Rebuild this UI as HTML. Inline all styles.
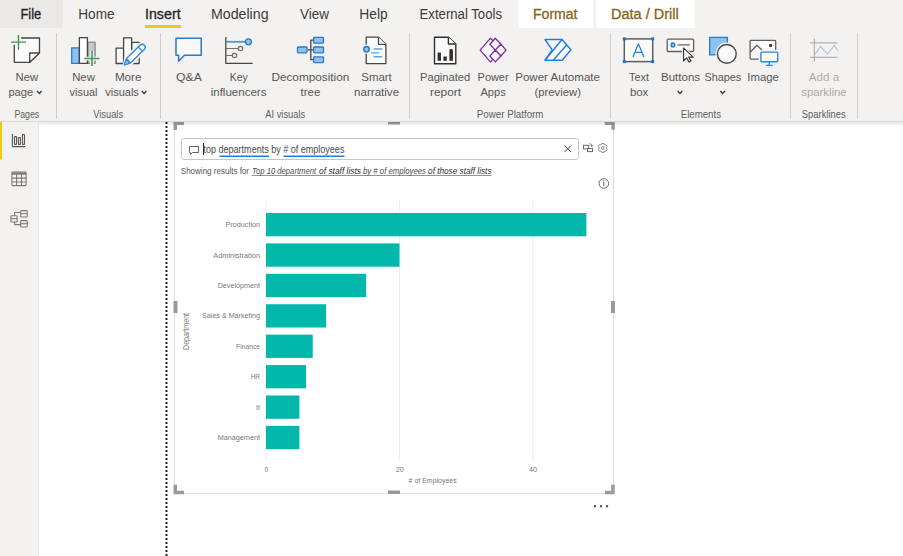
<!DOCTYPE html>
<html><head><meta charset="utf-8"><style>
html,body{margin:0;padding:0;background:#fff;width:903px;height:556px;overflow:hidden}
svg{position:absolute;left:0;top:0;font-family:"Liberation Sans",sans-serif}
</style></head><body>
<svg width="903" height="556" viewBox="0 0 903 556">
<rect x="0" y="0" width="903" height="121" fill="#f3f2f1"/>
<rect x="0" y="0" width="63" height="28" fill="#eae9e8"/>
<rect x="518.5" y="0" width="74.5" height="28" fill="#ffffff"/>
<rect x="596.5" y="0" width="98" height="28" fill="#ffffff"/>
<defs><linearGradient id="sh" x1="0" y1="0" x2="0" y2="1"><stop offset="0" stop-color="#000" stop-opacity="0.10"/><stop offset="1" stop-color="#000" stop-opacity="0"/></linearGradient></defs>
<rect x="0" y="121" width="39" height="435" fill="#f3f2f1"/>
<rect x="0" y="121" width="2" height="38.5" fill="#f2c811"/>
<rect x="38" y="121" width="1" height="435" fill="#ebe9e7"/>
<rect x="145" y="25" width="36" height="3" fill="#f2c811"/>
<rect x="56" y="33" width="1" height="86" fill="#cfcdcb"/>
<rect x="160" y="33" width="1" height="86" fill="#cfcdcb"/>
<rect x="409" y="33" width="1" height="86" fill="#cfcdcb"/>
<rect x="610" y="33" width="1" height="86" fill="#cfcdcb"/>
<rect x="790" y="33" width="1" height="86" fill="#cfcdcb"/>
<rect x="857" y="33" width="1" height="86" fill="#cfcdcb"/>
<line x1="166.5" y1="122" x2="166.5" y2="556" stroke="#222" stroke-width="2" stroke-dasharray="2 2"/>
<rect x="174.5" y="121.5" width="439" height="372" fill="none" stroke="#dedede" stroke-width="1"/>
<path d="M173.5 121.5 H184 V125 H177 V130 H173.5 Z" fill="#9a9a9a"/>
<path d="M614.9 121.5 H604.8 V125 H611.4 V129.8 H614.9 Z" fill="#9a9a9a"/>
<path d="M173.5 494.3 H184 V490.8 H177 V484.7 H173.5 Z" fill="#9a9a9a"/>
<path d="M614.7 494.3 H604.9 V490.8 H611.2 V484.8 H614.7 Z" fill="#9a9a9a"/>
<rect x="388" y="121.5" width="12" height="3" fill="#9a9a9a"/>
<rect x="388" y="490.5" width="12" height="3.5" fill="#9a9a9a"/>
<rect x="173.5" y="301" width="4" height="12" fill="#9a9a9a"/>
<rect x="611" y="301" width="4" height="12" fill="#9a9a9a"/>
<rect x="0" y="121" width="903" height="1" fill="#d9d8d7"/>
<rect x="39" y="122" width="864" height="4" fill="url(#sh)"/>
<rect x="181.5" y="138.5" width="397" height="21" rx="2" fill="#fff" stroke="#c8c6c4"/>
<path d="M189.5 146.5 h9 v6 h-6 l-2 2 v-2 h-1 z" fill="none" stroke="#605e5c" stroke-width="1"/>
<rect x="203" y="143" width="1" height="12" fill="#222"/>
<rect x="219.5" y="155.5" width="49.5" height="1.5" fill="#1e7fd8"/>
<rect x="283.5" y="155.5" width="61" height="1.5" fill="#1e7fd8"/>
<path d="M564.5 145.5 L571 152 M571 145.5 L564.5 152" stroke="#444" stroke-width="1"/>
<g fill="none" stroke="#6a6a6a" stroke-width="1"><rect x="583.5" y="145.3" width="5.2" height="3.6"/><rect x="587.5" y="148.5" width="5" height="3.1" fill="#fff"/><path d="M589.7 143.6 Q591.8 143.6 591.8 146" stroke-width="0.9"/><path d="M590.6 145.4 L591.8 146.8 L593 145.4" stroke-width="0.9"/></g>
<g fill="none" stroke="#7a7a7a" stroke-width="0.9" stroke-linejoin="round"><path d="M606.39 148.16 L607.23 149.14 L606.09 151.11 L604.82 150.88 L604.37 151.14 L603.94 152.36 L601.66 152.36 L601.23 151.14 L600.78 150.88 L599.51 151.11 L598.37 149.14 L599.21 148.16 L599.21 147.64 L598.37 146.66 L599.51 144.69 L600.78 144.92 L601.23 144.66 L601.66 143.44 L603.94 143.44 L604.37 144.66 L604.82 144.92 L606.09 144.69 L607.23 146.66 L606.39 147.64 Z"/><ellipse cx="602.8" cy="147.9" rx="1.2" ry="1.6"/></g>
<circle cx="603.8" cy="183.5" r="4.8" fill="none" stroke="#666" stroke-width="1"/><rect x="603.3" y="182" width="1" height="4" fill="#666"/><rect x="603.3" y="180.3" width="1" height="1" fill="#666"/>
<rect x="265.5" y="200.5" width="1" height="261" fill="#eeeeee"/>
<rect x="399.0" y="200.5" width="1" height="261" fill="#eeeeee"/>
<rect x="532.5" y="200.5" width="1" height="261" fill="#eeeeee"/>
<rect x="266" y="213.00" width="320.40" height="23.3" fill="#01b8aa"/>
<rect x="266" y="243.41" width="133.50" height="23.3" fill="#01b8aa"/>
<rect x="266" y="273.82" width="100.12" height="23.3" fill="#01b8aa"/>
<rect x="266" y="304.23" width="60.07" height="23.3" fill="#01b8aa"/>
<rect x="266" y="334.64" width="46.73" height="23.3" fill="#01b8aa"/>
<rect x="266" y="365.05" width="40.05" height="23.3" fill="#01b8aa"/>
<rect x="266" y="395.46" width="33.38" height="23.3" fill="#01b8aa"/>
<rect x="266" y="425.87" width="33.38" height="23.3" fill="#01b8aa"/>
<rect x="593.9" y="505.1" width="2.2" height="2.2" fill="#555"/>
<rect x="599.9" y="505.1" width="2.2" height="2.2" fill="#555"/>
<rect x="605.9" y="505.1" width="2.2" height="2.2" fill="#555"/>
<path d="M37.0 91.10000000000001 l2.3 2.3 l2.3 -2.3" fill="none" stroke="#3b3a39" stroke-width="1.4"/>
<path d="M141.79999999999998 91.10000000000001 l2.3 2.3 l2.3 -2.3" fill="none" stroke="#3b3a39" stroke-width="1.4"/>
<path d="M677.7 91.10000000000001 l2.3 2.3 l2.3 -2.3" fill="none" stroke="#3b3a39" stroke-width="1.4"/>
<path d="M720.3000000000001 91.10000000000001 l2.3 2.3 l2.3 -2.3" fill="none" stroke="#3b3a39" stroke-width="1.4"/>
<rect x="251.5" y="175" width="240" height="0.8" fill="#777"/>
<!-- New page -->
<g stroke-linejoin="round">
<path d="M14.3 44.8 V62.3 H29.7 L39.5 52.8 V38 H21.1" fill="#fafafa" stroke="#484644" stroke-width="1.3"/>
<path d="M29.7 62.3 V53 H39.5 Z" fill="#fff" stroke="#484644" stroke-width="1.3"/>
<path d="M11.1 42.1 H26 M18.5 34.9 V49.7" stroke="#3a9a52" stroke-width="1.4" fill="none"/>
</g>
<!-- New visual -->
<g stroke-linejoin="round">
<rect x="71.7" y="47.9" width="7.6" height="15.5" fill="#8cc1f3" stroke="#2f7bd0" stroke-width="1.3"/>
<rect x="87.9" y="42.1" width="7.2" height="21.3" fill="#c8c8c8" stroke="#8a8a8a" stroke-width="1.3"/>
<rect x="79.4" y="37.6" width="8" height="25.8" fill="#fff" stroke="#484644" stroke-width="1.3"/>
<path d="M84.3 58.6 H99.5 M92 51.1 V66" stroke="#f3f2f1" stroke-width="3.6" fill="none"/>
<path d="M84.3 58.6 H99.5 M92 51.1 V66" stroke="#3a9a52" stroke-width="1.5" fill="none"/>
</g>
<!-- More visuals -->
<g stroke-linejoin="round" fill="#fafafa" stroke="#484644" stroke-width="1.3">
<rect x="116.1" y="48.2" width="7.5" height="15.3"/>
<rect x="131.6" y="42.4" width="7.6" height="21.1"/>
<rect x="123.6" y="37.9" width="8" height="25.6"/>
</g>
<g transform="translate(123.6 65.6) rotate(-44.5)" stroke-linejoin="round">
<path d="M1 0 L7 -4 H26 A4 4 0 0 1 26 4 H7 Z" fill="#f3f2f1" stroke="#f3f2f1" stroke-width="3"/>
<path d="M1 0 L7 -3 H26 A3 3 0 0 1 26 3 H7 Z" fill="#fafafa" stroke="#2b88d8" stroke-width="1.3"/>
<path d="M1 0 L6 -2.5 V2.5 Z" fill="#8cc1f3" stroke="#2b88d8" stroke-width="1"/>
<path d="M7 -3 V3 M23.5 -3 V3" stroke="#2b88d8" stroke-width="1.2" fill="none"/>
</g>
<!-- Q&A -->
<path d="M176 38.3 H201.2 V55.2 H184.4 L178.6 61.2 V55.2 H176 Z" fill="#f9f9f9" stroke="#2b79c8" stroke-width="1.5" stroke-linejoin="round"/>
<!-- Key influencers -->
<g fill="none" stroke-linejoin="round">
<path d="M225.8 36.9 V63.3 H252.6" stroke="#484644" stroke-width="1.3"/>
<path d="M225.8 41.8 H245" stroke="#4a9ad8" stroke-width="1.8"/>
<circle cx="248.4" cy="41.8" r="3" fill="#8cc4f5" stroke="#2b79c8" stroke-width="1.3"/>
<path d="M225.8 48.5 H238.2 M225.8 55.5 H232.2" stroke="#6e6d6b" stroke-width="1.2"/>
<circle cx="240.5" cy="48.5" r="2.2" fill="#f3f2f1" stroke="#6e6d6b" stroke-width="1.2"/>
<circle cx="234.5" cy="55.5" r="2.2" fill="#f3f2f1" stroke="#6e6d6b" stroke-width="1.2"/>
</g>
<!-- Decomposition tree -->
<g stroke-linejoin="round">
<path d="M307.5 49.9 H313 M313 40.2 H310.8 V59.6 H313" fill="none" stroke="#484644" stroke-width="1.3"/>
<g fill="#8ec2f2" stroke="#2b79c8" stroke-width="1.3">
<rect x="297.5" y="47" width="9.5" height="5.8" rx="0.8"/>
<rect x="313.6" y="37.3" width="9.9" height="5.9" rx="0.8"/>
<rect x="313.6" y="47" width="9.9" height="5.8" rx="0.8"/>
<rect x="313.6" y="56.9" width="9.9" height="5.7" rx="0.8"/>
</g>
</g>
<!-- Smart narrative -->
<g stroke-linejoin="round">
<path d="M366.2 63.6 V37.2 H378.5 L385.9 44.3 V63.6 Z" fill="#fafafa" stroke="#484644" stroke-width="1.3"/>
<path d="M378.5 37.2 V44.3 H385.9" fill="#fff" stroke="#484644" stroke-width="1.3"/>
<circle cx="366.5" cy="49.2" r="4.6" fill="#f3f2f1"/>
<circle cx="366.5" cy="49.2" r="2.7" fill="#8cc4f5" stroke="#1f78d1" stroke-width="1.4"/>
<path d="M373.6 49 H382.3 M371 52.9 H379.4 M373.6 56.7 H382.3" stroke="#5aa5e0" stroke-width="1.4" fill="none"/>
</g>
<!-- Paginated report -->
<g stroke-linejoin="round">
<path d="M434.5 63.7 V37.2 H448.4 L455.8 44 V63.7 Z" fill="#fafafa" stroke="#323130" stroke-width="1.4"/>
<path d="M448.4 37.2 V44 H455.8" fill="#fff" stroke="#323130" stroke-width="1.4"/>
<rect x="437.6" y="52.6" width="3.4" height="8.2" fill="#323130"/>
<rect x="443.4" y="56.5" width="3.4" height="4.3" fill="#323130"/>
<rect x="449.4" y="49.2" width="3.5" height="11.6" fill="#323130"/>
</g>
<!-- Power Apps -->
<g fill="#fbfbfb" stroke="#7e2a9f" stroke-width="1.3" stroke-linejoin="round" stroke-linecap="round">
<path d="M490.3 38.3 L480.2 50.1 L490.3 61.9 L495 57 L495.3 43 Z"/>
<path d="M495.3 38.3 L500.9 44.2 L495.3 50.1 L489.9 44.2 Z"/>
<path d="M495.3 50.1 L500.9 44.2 L506 50.1 L500.9 56 Z"/>
<path d="M495.3 50.1 L500.9 56 L495.3 61.9 L489.9 56 Z"/>
</g>
<!-- Power Automate -->
<g fill="#fafafa" stroke="#1f7de0" stroke-width="1.4" stroke-linejoin="round">
<path d="M545 39.5 H562 L570.9 49.8 L562.3 60.2 H545 L552.2 49.8 Z"/>
<path d="M562 39.5 L545 60.2 M566.6 45 L553.3 60.2" fill="none"/>
</g>
<!-- Text box -->
<g>
<rect x="624.3" y="38.9" width="28.4" height="22.7" fill="#fafafa" stroke="#605e5c" stroke-width="1.5"/>
<g fill="#0f78d4">
<rect x="622.8" y="37.4" width="3" height="3"/><rect x="651.2" y="37.4" width="3" height="3"/>
<rect x="622.8" y="60.1" width="3" height="3"/><rect x="651.2" y="60.1" width="3" height="3"/>
</g>
<path d="M633 57 L638.4 43.8 L643.9 57 M634.8 52.3 H642.1" fill="none" stroke="#2089dd" stroke-width="1.3" stroke-linejoin="round"/>
</g>
<!-- Buttons -->
<g stroke-linejoin="round">
<rect x="667.2" y="39.1" width="26.4" height="12.4" rx="1" fill="#f9f9f9" stroke="#605e5c" stroke-width="1.3"/>
<circle cx="672.9" cy="44.9" r="1.9" fill="#8cc4f5" stroke="#1f78d1" stroke-width="1.3"/>
<path d="M677.5 44.9 H689.9" stroke="#6e6d6b" stroke-width="1.3"/>
<path d="M683.6 48.1 V61 L686.6 57.9 L689 62 L691 61 L688.7 57.1 L693.3 57.1 Z" fill="#f3f2f1" stroke="#f3f2f1" stroke-width="3"/>
<path d="M683.6 48.1 V61 L686.6 57.9 L689 62 L691 61 L688.7 57.1 L693.3 57.1 Z" fill="#fff" stroke="#3b3a39" stroke-width="1.2"/>
</g>
<!-- Shapes -->
<g>
<rect x="709.7" y="37.4" width="17.7" height="17.4" fill="#8ec2f2" stroke="#2b79c8" stroke-width="1.3"/>
<circle cx="726.8" cy="53.9" r="11.3" fill="#f3f2f1"/>
<circle cx="726.8" cy="53.9" r="9.4" fill="#f9f9f9" stroke="#484644" stroke-width="1.4"/>
</g>
<!-- Image -->
<g stroke-linejoin="round">
<rect x="750.1" y="40.4" width="25.6" height="18.7" rx="0.8" fill="#fafafa" stroke="#605e5c" stroke-width="1.3"/>
<path d="M750.1 52.3 L756.9 45.3 L762.5 50.6" fill="none" stroke="#605e5c" stroke-width="1.3"/>
<circle cx="770.6" cy="45.4" r="1.6" fill="#323130"/>
<rect x="758.7" y="50" width="21.2" height="14" fill="#f3f2f1"/>
<rect x="760.9" y="52.1" width="16.8" height="9.7" rx="0.8" fill="#fafafa" stroke="#2b88d8" stroke-width="1.4"/>
<path d="M769.2 62 V65.3 M765.9 65.4 H772.6" fill="none" stroke="#2b88d8" stroke-width="1.3"/>
</g>
<!-- Sparkline -->
<g fill="none">
<path d="M814.4 38.8 V61.5 M810 42.8 H837.4 M810 57.3 H837.4" stroke="#b3b1af" stroke-width="1.2"/>
<path d="M815.3 54.1 L820.5 46.3 L827.5 54.1 L834.4 45.4 L837.9 50.7" stroke="#a6c8e6" stroke-width="1.1" stroke-linejoin="round"/>
</g>
<!-- left nav: report -->
<g fill="none" stroke="#5a5856" stroke-width="1.1" stroke-linejoin="round">
<path d="M12.4 134 V146.6 H25.4"/>
<rect x="14.5" y="136.6" width="2" height="7.8" rx="0.5"/>
<rect x="18.4" y="137.6" width="2" height="6.8" rx="0.5"/>
<rect x="22.5" y="134.6" width="2" height="9.8" rx="0.5"/>
</g>
<!-- left nav: table -->
<g fill="none" stroke="#7a7876" stroke-width="1.05">
<rect x="11.9" y="172.1" width="14.2" height="13.5" rx="0.8"/>
<path d="M11.9 173.8 H26.1" stroke-width="1.8"/>
<path d="M11.9 178.1 H26.1 M11.9 181.9 H26.1 M16.6 174.3 V185.6 M21.5 174.3 V185.6"/>
</g>
<!-- left nav: model -->
<g fill="none" stroke="#7a7876" stroke-width="1.05" stroke-linejoin="round">
<rect x="10.9" y="215.8" width="6.2" height="6.2" rx="0.8"/>
<path d="M10.9 218.7 H17.1"/>
<rect x="20.7" y="210.6" width="6.5" height="6.4" rx="0.8"/>
<path d="M20.7 213.7 H27.2"/>
<rect x="20.7" y="220.6" width="6.5" height="6.4" rx="0.8"/>
<path d="M20.7 223.7 H27.2"/>
<path d="M14.6 215.8 V212.4 H20.7 M14.6 222 V224.6 H20.7"/>
</g>

<text x="20.40" y="18.60" font-size="14" fill="#252423" font-weight="normal" font-style="normal" textLength="20.80" lengthAdjust="spacingAndGlyphs" stroke="#252423" stroke-width="0.3">File</text>
<text x="78.30" y="18.60" font-size="14" fill="#3b3a39" font-weight="normal" font-style="normal" textLength="36.29" lengthAdjust="spacingAndGlyphs" >Home</text>
<text x="145.00" y="18.60" font-size="14" fill="#252423" font-weight="normal" font-style="normal" textLength="35.60" lengthAdjust="spacingAndGlyphs" stroke="#252423" stroke-width="0.3">Insert</text>
<text x="210.90" y="18.60" font-size="14" fill="#3b3a39" font-weight="normal" font-style="normal" textLength="57.70" lengthAdjust="spacingAndGlyphs" >Modeling</text>
<text x="300.00" y="18.60" font-size="14" fill="#3b3a39" font-weight="normal" font-style="normal" textLength="28.97" lengthAdjust="spacingAndGlyphs" >View</text>
<text x="359.30" y="18.60" font-size="14" fill="#3b3a39" font-weight="normal" font-style="normal" textLength="28.40" lengthAdjust="spacingAndGlyphs" >Help</text>
<text x="419.60" y="18.60" font-size="14" fill="#3b3a39" font-weight="normal" font-style="normal" textLength="82.40" lengthAdjust="spacingAndGlyphs" >External Tools</text>
<text x="533.00" y="18.60" font-size="14" fill="#84661a" font-weight="normal" font-style="normal" textLength="44.50" lengthAdjust="spacingAndGlyphs" stroke="#84661a" stroke-width="0.3">Format</text>
<text x="611.00" y="18.60" font-size="14" fill="#84661a" font-weight="normal" font-style="normal" textLength="67.69" lengthAdjust="spacingAndGlyphs" stroke="#84661a" stroke-width="0.3">Data / Drill</text>
<text x="15.60" y="80.50" font-size="11.5" fill="#575553" font-weight="normal" font-style="normal" textLength="22.67" lengthAdjust="spacingAndGlyphs" >New</text>
<text x="8.40" y="96.00" font-size="11.5" fill="#575553" font-weight="normal" font-style="normal" textLength="24.70" lengthAdjust="spacingAndGlyphs" >page</text>
<text x="72.20" y="80.50" font-size="11.5" fill="#575553" font-weight="normal" font-style="normal" textLength="22.67" lengthAdjust="spacingAndGlyphs" >New</text>
<text x="69.60" y="96.00" font-size="11.5" fill="#575553" font-weight="normal" font-style="normal" textLength="27.90" lengthAdjust="spacingAndGlyphs" >visual</text>
<text x="114.90" y="80.50" font-size="11.5" fill="#575553" font-weight="normal" font-style="normal" textLength="26.60" lengthAdjust="spacingAndGlyphs" >More</text>
<text x="105.20" y="96.00" font-size="11.5" fill="#575553" font-weight="normal" font-style="normal" textLength="33.70" lengthAdjust="spacingAndGlyphs" >visuals</text>
<text x="176.10" y="80.50" font-size="11.5" fill="#575553" font-weight="normal" font-style="normal" textLength="25.70" lengthAdjust="spacingAndGlyphs" >Q&amp;A</text>
<text x="229.80" y="80.50" font-size="11.5" fill="#575553" font-weight="normal" font-style="normal" textLength="18.00" lengthAdjust="spacingAndGlyphs" >Key</text>
<text x="210.70" y="96.00" font-size="11.5" fill="#575553" font-weight="normal" font-style="normal" textLength="55.80" lengthAdjust="spacingAndGlyphs" >influencers</text>
<text x="271.40" y="80.50" font-size="11.5" fill="#575553" font-weight="normal" font-style="normal" textLength="77.90" lengthAdjust="spacingAndGlyphs" >Decomposition</text>
<text x="300.60" y="96.00" font-size="11.5" fill="#575553" font-weight="normal" font-style="normal" textLength="19.80" lengthAdjust="spacingAndGlyphs" >tree</text>
<text x="361.30" y="80.50" font-size="11.5" fill="#575553" font-weight="normal" font-style="normal" textLength="30.50" lengthAdjust="spacingAndGlyphs" >Smart</text>
<text x="354.10" y="96.00" font-size="11.5" fill="#575553" font-weight="normal" font-style="normal" textLength="45.00" lengthAdjust="spacingAndGlyphs" >narrative</text>
<text x="420.00" y="80.50" font-size="11.5" fill="#575553" font-weight="normal" font-style="normal" textLength="50.20" lengthAdjust="spacingAndGlyphs" >Paginated</text>
<text x="430.00" y="96.00" font-size="11.5" fill="#575553" font-weight="normal" font-style="normal" textLength="31.00" lengthAdjust="spacingAndGlyphs" >report</text>
<text x="477.60" y="80.50" font-size="11.5" fill="#575553" font-weight="normal" font-style="normal" textLength="30.99" lengthAdjust="spacingAndGlyphs" >Power</text>
<text x="480.40" y="96.00" font-size="11.5" fill="#575553" font-weight="normal" font-style="normal" textLength="25.30" lengthAdjust="spacingAndGlyphs" >Apps</text>
<text x="515.20" y="80.50" font-size="11.5" fill="#575553" font-weight="normal" font-style="normal" textLength="84.81" lengthAdjust="spacingAndGlyphs" >Power Automate</text>
<text x="534.50" y="96.00" font-size="11.5" fill="#575553" font-weight="normal" font-style="normal" textLength="46.50" lengthAdjust="spacingAndGlyphs" >(preview)</text>
<text x="629.10" y="80.50" font-size="11.5" fill="#575553" font-weight="normal" font-style="normal" textLength="19.80" lengthAdjust="spacingAndGlyphs" >Text</text>
<text x="629.90" y="96.00" font-size="11.5" fill="#575553" font-weight="normal" font-style="normal" textLength="18.40" lengthAdjust="spacingAndGlyphs" >box</text>
<text x="661.00" y="80.50" font-size="11.5" fill="#575553" font-weight="normal" font-style="normal" textLength="39.10" lengthAdjust="spacingAndGlyphs" >Buttons</text>
<text x="704.50" y="80.50" font-size="11.5" fill="#575553" font-weight="normal" font-style="normal" textLength="36.70" lengthAdjust="spacingAndGlyphs" >Shapes</text>
<text x="747.30" y="80.50" font-size="11.5" fill="#575553" font-weight="normal" font-style="normal" textLength="31.50" lengthAdjust="spacingAndGlyphs" >Image</text>
<text x="808.80" y="80.50" font-size="11.5" fill="#acaaa8" font-weight="normal" font-style="normal" textLength="30.29" lengthAdjust="spacingAndGlyphs" >Add a</text>
<text x="801.30" y="96.00" font-size="11.5" fill="#acaaa8" font-weight="normal" font-style="normal" textLength="45.30" lengthAdjust="spacingAndGlyphs" >sparkline</text>
<text x="14.40" y="118.00" font-size="10" fill="#605e5c" font-weight="normal" font-style="normal" textLength="24.80" lengthAdjust="spacingAndGlyphs" >Pages</text>
<text x="93.20" y="118.00" font-size="10" fill="#605e5c" font-weight="normal" font-style="normal" textLength="29.90" lengthAdjust="spacingAndGlyphs" >Visuals</text>
<text x="265.30" y="118.00" font-size="10" fill="#605e5c" font-weight="normal" font-style="normal" textLength="39.80" lengthAdjust="spacingAndGlyphs" >AI visuals</text>
<text x="476.80" y="118.00" font-size="10" fill="#605e5c" font-weight="normal" font-style="normal" textLength="66.70" lengthAdjust="spacingAndGlyphs" >Power Platform</text>
<text x="680.70" y="118.00" font-size="10" fill="#605e5c" font-weight="normal" font-style="normal" textLength="40.30" lengthAdjust="spacingAndGlyphs" >Elements</text>
<text x="801.80" y="118.00" font-size="10" fill="#605e5c" font-weight="normal" font-style="normal" textLength="44.00" lengthAdjust="spacingAndGlyphs" >Sparklines</text>
<text x="203.50" y="152.70" font-size="11" fill="#4a4a4a" font-weight="normal" font-style="normal" textLength="140.90" lengthAdjust="spacingAndGlyphs" >top departments by # of employees</text>
<text x="180.80" y="173.80" font-size="8.8" fill="#555" font-weight="normal" font-style="normal" textLength="68.20" lengthAdjust="spacingAndGlyphs" >Showing results for</text>
<text x="252.00" y="173.80" font-size="8.8" fill="#4a4a4a" font-weight="normal" font-style="italic" textLength="64.13" lengthAdjust="spacingAndGlyphs" >Top 10 department</text>
<text x="319.10" y="173.80" font-size="8.8" fill="#2a2a2a" font-weight="normal" font-style="italic" textLength="41.90" lengthAdjust="spacingAndGlyphs" >of staff lists</text>
<text x="363.00" y="173.80" font-size="8.8" fill="#4a4a4a" font-weight="normal" font-style="italic" textLength="63.00" lengthAdjust="spacingAndGlyphs" >by # of employees</text>
<text x="428.10" y="173.80" font-size="8.8" fill="#2a2a2a" font-weight="normal" font-style="italic" textLength="63.40" lengthAdjust="spacingAndGlyphs" >of those staff lists</text>
<text x="225.60" y="227.10" font-size="7.9" fill="#7a7a7a" font-weight="normal" font-style="normal" textLength="34.40" lengthAdjust="spacingAndGlyphs" >Production</text>
<text x="213.30" y="257.51" font-size="7.9" fill="#7a7a7a" font-weight="normal" font-style="normal" textLength="46.70" lengthAdjust="spacingAndGlyphs" >Administration</text>
<text x="217.70" y="287.92" font-size="7.9" fill="#7a7a7a" font-weight="normal" font-style="normal" textLength="42.30" lengthAdjust="spacingAndGlyphs" >Development</text>
<text x="202.10" y="318.33" font-size="7.9" fill="#7a7a7a" font-weight="normal" font-style="normal" textLength="57.90" lengthAdjust="spacingAndGlyphs" >Sales &amp; Marketing</text>
<text x="236.10" y="348.74" font-size="7.9" fill="#7a7a7a" font-weight="normal" font-style="normal" textLength="23.90" lengthAdjust="spacingAndGlyphs" >Finance</text>
<text x="250.70" y="379.15" font-size="7.9" fill="#7a7a7a" font-weight="normal" font-style="normal" textLength="9.30" lengthAdjust="spacingAndGlyphs" >HR</text>
<text x="255.90" y="409.56" font-size="7.9" fill="#7a7a7a" font-weight="normal" font-style="normal" textLength="4.10" lengthAdjust="spacingAndGlyphs" >It</text>
<text x="217.70" y="439.97" font-size="7.9" fill="#7a7a7a" font-weight="normal" font-style="normal" textLength="42.30" lengthAdjust="spacingAndGlyphs" >Management</text>
<text x="264.60" y="471.80" font-size="8" fill="#777" font-weight="normal" font-style="normal" textLength="3.60" lengthAdjust="spacingAndGlyphs" >0</text>
<text x="395.80" y="471.80" font-size="8" fill="#777" font-weight="normal" font-style="normal" textLength="8.00" lengthAdjust="spacingAndGlyphs" >20</text>
<text x="529.00" y="471.80" font-size="8" fill="#777" font-weight="normal" font-style="normal" textLength="8.00" lengthAdjust="spacingAndGlyphs" >40</text>
<text x="408.60" y="482.90" font-size="8" fill="#777" font-weight="normal" font-style="normal" textLength="48.10" lengthAdjust="spacingAndGlyphs" ># of Employees</text>
<text transform="translate(189.3 350) rotate(-90)" x="0.00" y="0" font-size="8.2" fill="#808080" textLength="37.10" lengthAdjust="spacingAndGlyphs">Department</text>
</svg>
</body></html>
